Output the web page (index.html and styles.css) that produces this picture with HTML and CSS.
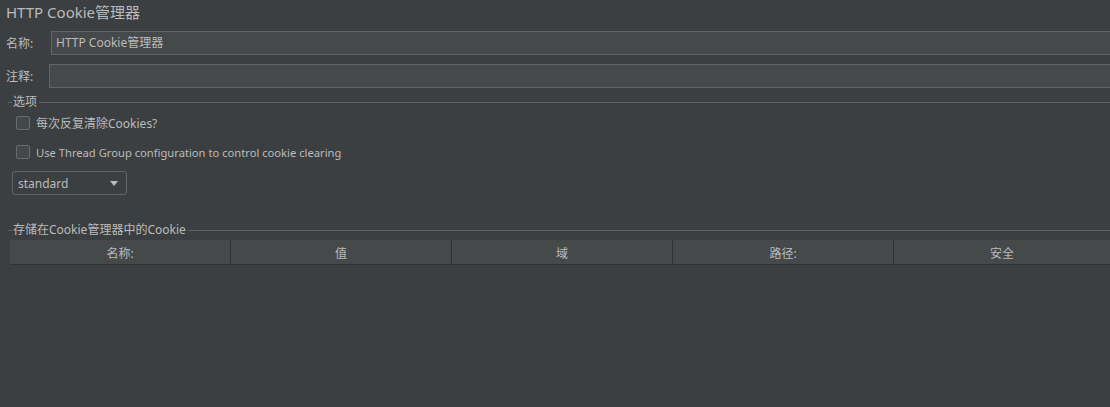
FILE: index.html
```html
<!DOCTYPE html>
<html>
<head>
<meta charset="utf-8">
<link rel="stylesheet" href="styles.css">
</head>
<body>
<div class="page">
  <div class="title">HTTP Cookie管理器</div>
  <div class="row row-name">
    <span class="label">名称:</span>
    <div class="input name-input">HTTP Cookie管理器</div>
  </div>
  <div class="row row-comment">
    <span class="label">注释:</span>
    <div class="input comment-input"></div>
  </div>
  <div class="group-title options-title"><span class="legend">选项</span></div>
  <div class="check check-1"><span class="box"></span><span>每次反复清除Cookies?</span></div>
  <div class="check check-2"><span class="box"></span><span class="check-text">Use Thread Group configuration to control cookie clearing</span></div>
  <div class="select"><span>standard</span><span class="arrow"></span></div>
  <div class="group-title cookies-title"><span class="legend">存储在Cookie管理器中的Cookie</span></div>
  <div class="table-head">
    <div class="th">名称:</div>
    <div class="th">值</div>
    <div class="th">域</div>
    <div class="th">路径:</div>
    <div class="th last">安全</div>
  </div>
</div>
</body>
</html>
```
FILE: styles.css
```css
html, body {
  margin: 0;
  padding: 0;
  background: #3c3f41;
  width: 1110px;
  height: 407px;
  overflow: hidden;
}
.page {
  font-family: "Noto Sans", "Noto Sans CJK SC", sans-serif;
  font-size: 12px;
  color: #bbbbbb;
  display: flex;
  flex-direction: column;
}
.title {
  font-size: 15px;
  height: 25px;
  line-height: 25px;
  padding-left: 6px;
  color: #bbbbbb;
}
.row {
  display: flex;
  align-items: center;
  height: 24px;
}
.row-name { margin-top: 6px; }
.row-comment { margin-top: 9px; }
.label {
  padding-left: 6px;
  white-space: nowrap;
  box-sizing: border-box;
}
.row-name .label { width: 51px; }
.row-comment .label { width: 49px; }
.input {
  flex: 1;
  height: 24px;
  box-sizing: border-box;
  background: #45494a;
  border: 1px solid #646464;
  border-right: none;
  line-height: 22px;
  padding-left: 4px;
}
.group-title {
  display: flex;
  align-items: center;
  height: 14px;
}
.group-title::before {
  content: "";
  width: 4px;
  height: 1px;
  background: #5e6163;
  margin-left: 8px;
}
.group-title::after {
  content: "";
  flex: 1;
  height: 1px;
  background: #5e6163;
}
.legend {
  padding: 0 2px 0 1px;
  line-height: 14px;
}
.options-title { margin-top: 7px; }
.check {
  display: flex;
  align-items: center;
  height: 16px;
  padding-left: 16px;
}
.check-1 { margin-top: 6px; }
.check-2 { margin-top: 13px; }
.check-text { font-size: 11.2px; }
.box {
  width: 14px;
  height: 14px;
  box-sizing: border-box;
  border: 1px solid #6b6b6b;
  border-radius: 2px;
  background: #43494a;
  margin-right: 6px;
}
.select {
  margin-top: 11px;
  margin-left: 12px;
  width: 115px;
  height: 24px;
  box-sizing: border-box;
  border: 1px solid #646464;
  border-radius: 3px;
  background: #3c3f41;
  display: flex;
  align-items: center;
  justify-content: space-between;
  padding: 0 8px 0 5px;
}
.arrow {
  width: 0;
  height: 0;
  border-left: 4px solid transparent;
  border-right: 4px solid transparent;
  border-top: 5px solid #bbbbbb;
}
.cookies-title { margin-top: 28px; }
.table-head {
  margin-top: 3px;
  margin-left: 10px;
  display: flex;
  height: 25px;
  box-sizing: border-box;
  background: #45494a;
  border-bottom: 1px solid #323232;
}
.th {
  width: 221px;
  box-sizing: border-box;
  border-right: 1px solid #2f3133;
  text-align: center;
  line-height: 24px;
  padding-top: 2px;
  flex: none;
}
.th.last {
  border-right: none;
  flex: 1;
}
```
